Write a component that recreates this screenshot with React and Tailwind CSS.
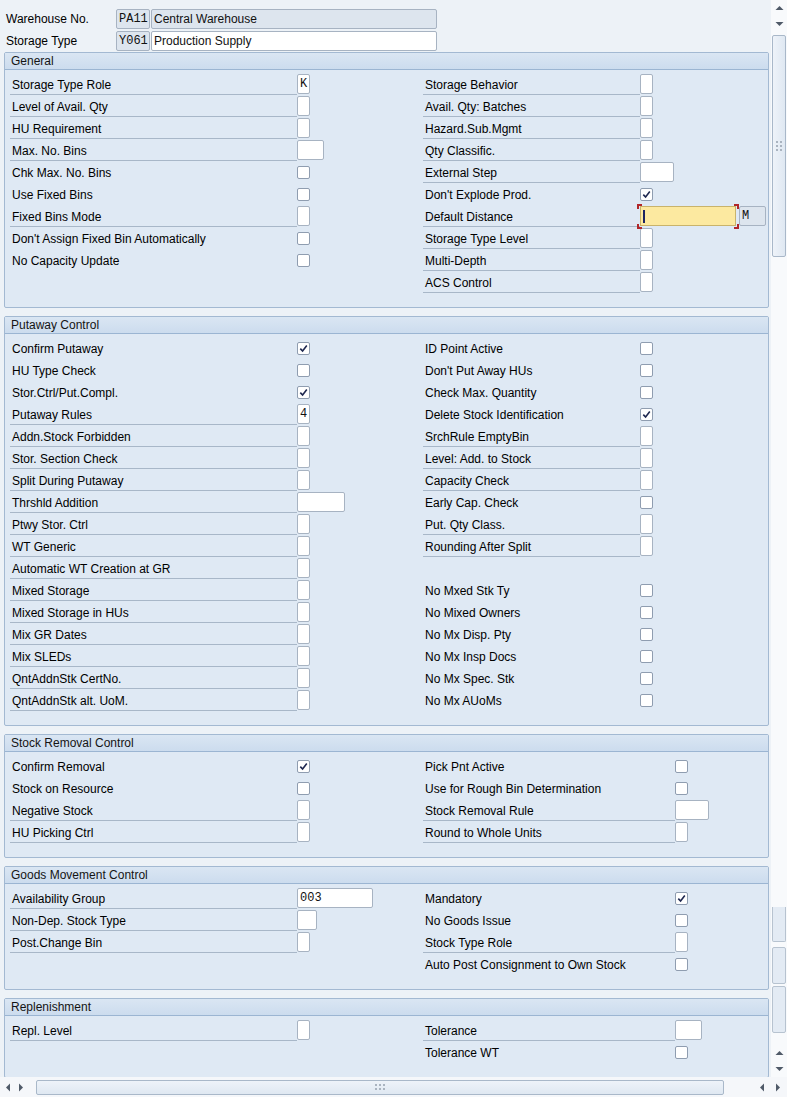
import React from "react";

const SANS = "font-['Liberation_Sans',Arial,sans-serif]";
const MONO = "font-['Liberation_Mono','Courier_New',monospace]";

const general = {
  lw: "w-[217px]",
  left: [
    { l: "Storage Type Role", t: "f", w: "w-[13px]", v: "K" },
    { l: "Level of Avail. Qty", t: "f", w: "w-[13px]" },
    { l: "HU Requirement", t: "f", w: "w-[13px]" },
    { l: "Max. No. Bins", t: "f", w: "w-[27px]" },
    { l: "Chk Max. No. Bins", t: "c" },
    { l: "Use Fixed Bins", t: "c" },
    { l: "Fixed Bins Mode", t: "f", w: "w-[13px]" },
    { l: "Don't Assign Fixed Bin Automatically", t: "c" },
    { l: "No Capacity Update", t: "c" },
  ],
  right: [
    { l: "Storage Behavior", t: "f", w: "w-[13px]" },
    { l: "Avail. Qty: Batches", t: "f", w: "w-[13px]" },
    { l: "Hazard.Sub.Mgmt", t: "f", w: "w-[13px]" },
    { l: "Qty Classific.", t: "f", w: "w-[13px]" },
    { l: "External Step", t: "f", w: "w-[34px]" },
    { l: "Don't Explode Prod.", t: "cc" },
    { l: "Default Distance", t: "dd" },
    { l: "Storage Type Level", t: "f", w: "w-[13px]" },
    { l: "Multi-Depth", t: "f", w: "w-[13px]" },
    { l: "ACS Control", t: "f", w: "w-[13px]" },
  ],
};

const putaway = {
  lw: "w-[217px]",
  left: [
    { l: "Confirm Putaway", t: "cc" },
    { l: "HU Type Check", t: "c" },
    { l: "Stor.Ctrl/Put.Compl.", t: "cc" },
    { l: "Putaway Rules", t: "f", w: "w-[13px]", v: "4" },
    { l: "Addn.Stock Forbidden", t: "f", w: "w-[13px]" },
    { l: "Stor. Section Check", t: "f", w: "w-[13px]" },
    { l: "Split During Putaway", t: "f", w: "w-[13px]" },
    { l: "Thrshld Addition", t: "f", w: "w-[48px]" },
    { l: "Ptwy Stor. Ctrl", t: "f", w: "w-[13px]" },
    { l: "WT Generic", t: "f", w: "w-[13px]" },
    { l: "Automatic WT Creation at GR", t: "f", w: "w-[13px]" },
    { l: "Mixed Storage", t: "f", w: "w-[13px]" },
    { l: "Mixed Storage in HUs", t: "f", w: "w-[13px]" },
    { l: "Mix GR Dates", t: "f", w: "w-[13px]" },
    { l: "Mix SLEDs", t: "f", w: "w-[13px]" },
    { l: "QntAddnStk CertNo.", t: "f", w: "w-[13px]" },
    { l: "QntAddnStk alt. UoM.", t: "f", w: "w-[13px]" },
  ],
  right: [
    { l: "ID Point Active", t: "c" },
    { l: "Don't Put Away HUs", t: "c" },
    { l: "Check Max. Quantity", t: "c" },
    { l: "Delete Stock Identification", t: "cc" },
    { l: "SrchRule EmptyBin", t: "f", w: "w-[13px]" },
    { l: "Level: Add. to Stock", t: "f", w: "w-[13px]" },
    { l: "Capacity Check", t: "f", w: "w-[13px]" },
    { l: "Early Cap. Check", t: "c" },
    { l: "Put. Qty Class.", t: "f", w: "w-[13px]" },
    { l: "Rounding After Split", t: "f", w: "w-[13px]" },
    null,
    { l: "No Mxed Stk Ty", t: "c" },
    { l: "No Mixed Owners", t: "c" },
    { l: "No Mx Disp. Pty", t: "c" },
    { l: "No Mx Insp Docs", t: "c" },
    { l: "No Mx Spec. Stk", t: "c" },
    { l: "No Mx AUoMs", t: "c" },
  ],
};

const removal = {
  lw: "w-[252px]",
  left: [
    { l: "Confirm Removal", t: "cc" },
    { l: "Stock on Resource", t: "c" },
    { l: "Negative Stock", t: "f", w: "w-[13px]" },
    { l: "HU Picking Ctrl", t: "f", w: "w-[13px]" },
  ],
  right: [
    { l: "Pick Pnt Active", t: "c" },
    { l: "Use for Rough Bin Determination", t: "c" },
    { l: "Stock Removal Rule", t: "f", w: "w-[34px]" },
    { l: "Round to Whole Units", t: "f", w: "w-[13px]" },
  ],
};

const goods = {
  lw: "w-[252px]",
  left: [
    { l: "Availability Group", t: "f", w: "w-[76px]", v: "003" },
    { l: "Non-Dep. Stock Type", t: "f", w: "w-[20px]" },
    { l: "Post.Change Bin", t: "f", w: "w-[13px]" },
  ],
  right: [
    { l: "Mandatory", t: "cc" },
    { l: "No Goods Issue", t: "c" },
    { l: "Stock Type Role", t: "f", w: "w-[13px]" },
    { l: "Auto Post Consignment to Own Stock", t: "c" },
  ],
};

const repl = {
  lw: "w-[252px]",
  left: [{ l: "Repl. Level", t: "f", w: "w-[13px]" }],
  right: [
    { l: "Tolerance", t: "f", w: "w-[27px]" },
    { l: "Tolerance WT", t: "c" },
  ],
};

function Field({ w, v, grey, sans, extra = "" }) {
  return (
    <div
      className={`${w} h-[20px] mt-[1px] border border-[#a7b3c2] rounded-[2px] ${
        grey ? "bg-[#dde5ee]" : "bg-white"
      } ${sans ? SANS : MONO} text-[12px] leading-[19px] pl-[2px] text-[#111] whitespace-nowrap overflow-hidden ${extra}`}
    >
      {v}
    </div>
  );
}

function Check({ on }) {
  return (
    <div className="w-[13px] h-[13px] mt-[5px] bg-white border border-[#8f9db0] rounded-[2px] flex items-center justify-center">
      {on && (
        <svg width="11" height="11" viewBox="0 0 11 11">
          <path d="M2.3 5.6 L4.6 8 L8.8 2.6" fill="none" stroke="#1f2850" strokeWidth="1.6" />
        </svg>
      )}
    </div>
  );
}

function DefaultDistance() {
  return (
    <div className="flex">
      <div className="relative mt-[1px]">
        <div className="w-[96px] h-[20px] border border-[#c9b36b] bg-[#fce9a0] flex items-center pl-[2px]">
          <div className="w-[2px] h-[13px] bg-[#1b2360]" />
        </div>
        <div className="absolute -left-[3px] -top-[2px] w-[5px] h-[5px] border-l-2 border-t-2 border-[#b0262a]" />
        <div className="absolute -right-[3px] -top-[2px] w-[5px] h-[5px] border-r-2 border-t-2 border-[#b0262a]" />
        <div className="absolute -left-[3px] -bottom-[2px] w-[5px] h-[5px] border-l-2 border-b-2 border-[#b0262a]" />
        <div className="absolute -right-[3px] -bottom-[2px] w-[5px] h-[5px] border-r-2 border-b-2 border-[#b0262a]" />
      </div>
      <Field w="w-[27px]" v="M" grey extra="ml-[3px] text-[#1c2a70]" />
    </div>
  );
}

function Row({ item, lw }) {
  if (!item) return <div className="h-[22px]" />;
  const underline = item.t === "f" || item.t === "dd";
  let ctrl = null;
  if (item.t === "f") ctrl = <Field w={item.w} v={item.v} />;
  else if (item.t === "c") ctrl = <Check />;
  else if (item.t === "cc") ctrl = <Check on />;
  else if (item.t === "dd") ctrl = <DefaultDistance />;
  return (
    <div className="flex h-[22px]">
      <div
        className={`${lw} shrink-0 h-[22px] pl-[2px] pt-[3px] leading-[18px] whitespace-nowrap ${
          underline ? "border-b border-[#a8b7c8]" : ""
        }`}
      >
        {item.l}
      </div>
      {ctrl}
    </div>
  );
}

function Section({ title, data, first }) {
  return (
    <div
      className={`${first ? "" : "mt-[8px]"} border border-[#a3b9d2] bg-[#dfe9f4] rounded-[2px]`}
    >
      <div className="h-[17px] border-b border-[#9bb5d2] bg-gradient-to-b from-[#dae6f3] to-[#ccdcee] pl-[6px] leading-[16px] text-[#141414]">
        {title}
      </div>
      <div className="flex pt-[3px] pb-[14px] pl-[5px]">
        <div className="w-[413px] shrink-0 flex flex-col">
          {data.left.map((it, i) => (
            <Row key={i} item={it} lw="w-[287px]" />
          ))}
        </div>
        <div className="flex flex-col">
          {data.right.map((it, i) => (
            <Row key={i} item={it} lw={data.lw} />
          ))}
        </div>
      </div>
    </div>
  );
}

function Tri({ dir }) {
  if (dir === "left" || dir === "right") {
    const p = dir === "left" ? "M5 0.5 L1 4.5 L5 8.5 Z" : "M1 0.5 L5 4.5 L1 8.5 Z";
    return (
      <svg width="6" height="9" viewBox="0 0 6 9">
        <path d={p} fill="#4f5a68" />
      </svg>
    );
  }
  const d = dir === "up" ? "M0.5 5 L4.5 1 L8.5 5 Z" : "M0.5 1 L4.5 5 L8.5 1 Z";
  return (
    <svg width="9" height="6" viewBox="0 0 9 6">
      <path d={d} fill="#4f5a68" />
    </svg>
  );
}

function Grip({ vertical }) {
  return (
    <div className={`grid grid-cols-2 gap-[2px] ${vertical ? "" : "rotate-90"}`}>
      {[0, 1, 2, 3, 4, 5].map((i) => (
        <div key={i} className="w-[2px] h-[2px] bg-[#aab4c0]" />
      ))}
    </div>
  );
}

export default function App() {
  return (
    <div className={`w-[787px] h-[1097px] overflow-hidden flex flex-col bg-[#edf2f7] text-[12px] text-black ${SANS}`}>
      <div className="flex h-[1077px] shrink-0">
        <div className="w-[771px] shrink-0 overflow-hidden">
          <div className="pt-[8px] pl-[6px]">
            <div className="flex h-[22px]">
              <div className="w-[110px] pt-[1px] leading-[20px]">Warehouse No.</div>
              <Field w="w-[34px]" v="PA11" grey />
              <Field w="w-[286px]" v="Central Warehouse" grey sans extra="ml-[1px]" />
            </div>
            <div className="flex h-[22px]">
              <div className="w-[110px] pt-[1px] leading-[20px]">Storage Type</div>
              <Field w="w-[34px]" v="Y061" grey />
              <Field w="w-[286px]" v="Production Supply" sans extra="ml-[1px]" />
            </div>
          </div>
          <div className="pl-[4px] w-[769px]">
            <Section title="General" data={general} first />
            <Section title="Putaway Control" data={putaway} />
            <Section title="Stock Removal Control" data={removal} />
            <Section title="Goods Movement Control" data={goods} />
            <Section title="Replenishment" data={repl} />
          </div>
        </div>
        <div className="w-[16px] shrink-0 bg-[#f8fafc] flex flex-col items-center">
          <div className="h-[16px] w-full flex items-center justify-center">
            <Tri dir="up" />
          </div>
          <div className="h-[16px] w-full flex items-center justify-center">
            <Tri dir="down" />
          </div>
          <div className="mt-[3px] w-[14px] h-[222px] border border-[#a9b8c9] rounded-[2px] bg-gradient-to-r from-[#eef3f9] to-[#dfe8f2] flex items-center justify-center">
            <Grip vertical />
          </div>
          <div className="h-[650px] w-full" />
          <div className="w-[14px] h-[35px] border border-[#b7c3d0] border-t-0 rounded-b-[2px] bg-[#e3ebf4]" />
          <div className="h-[5px]" />
          <div className="w-[14px] h-[37px] border border-[#b7c3d0] rounded-[2px] bg-[#e3ebf4]" />
          <div className="h-[2px]" />
          <div className="w-[14px] h-[47px] border border-[#b7c3d0] rounded-[2px] bg-[#e3ebf4]" />
          <div className="flex-1" />
          <div className="h-[16px] w-full flex items-center justify-center">
            <Tri dir="up" />
          </div>
          <div className="h-[16px] w-full flex items-center justify-center">
            <Tri dir="down" />
          </div>
        </div>
      </div>
      <div className="h-[20px] shrink-0 flex items-center bg-[#f5f7fa]">
        <div className="w-[16px] flex justify-center">
          <Tri dir="left" />
        </div>
        <div className="w-[10px] flex justify-center">
          <Tri dir="right" />
        </div>
        <div className="ml-[10px] w-[688px] h-[15px] border border-[#a9b8c9] rounded-[2px] bg-gradient-to-b from-[#eef3f9] to-[#dfe8f2] flex items-center justify-center">
          <Grip />
        </div>
        <div className="flex-1" />
        <div className="w-[14px] flex justify-center">
          <Tri dir="left" />
        </div>
        <div className="w-[18px] flex justify-center">
          <Tri dir="right" />
        </div>
      </div>
    </div>
  );
}
